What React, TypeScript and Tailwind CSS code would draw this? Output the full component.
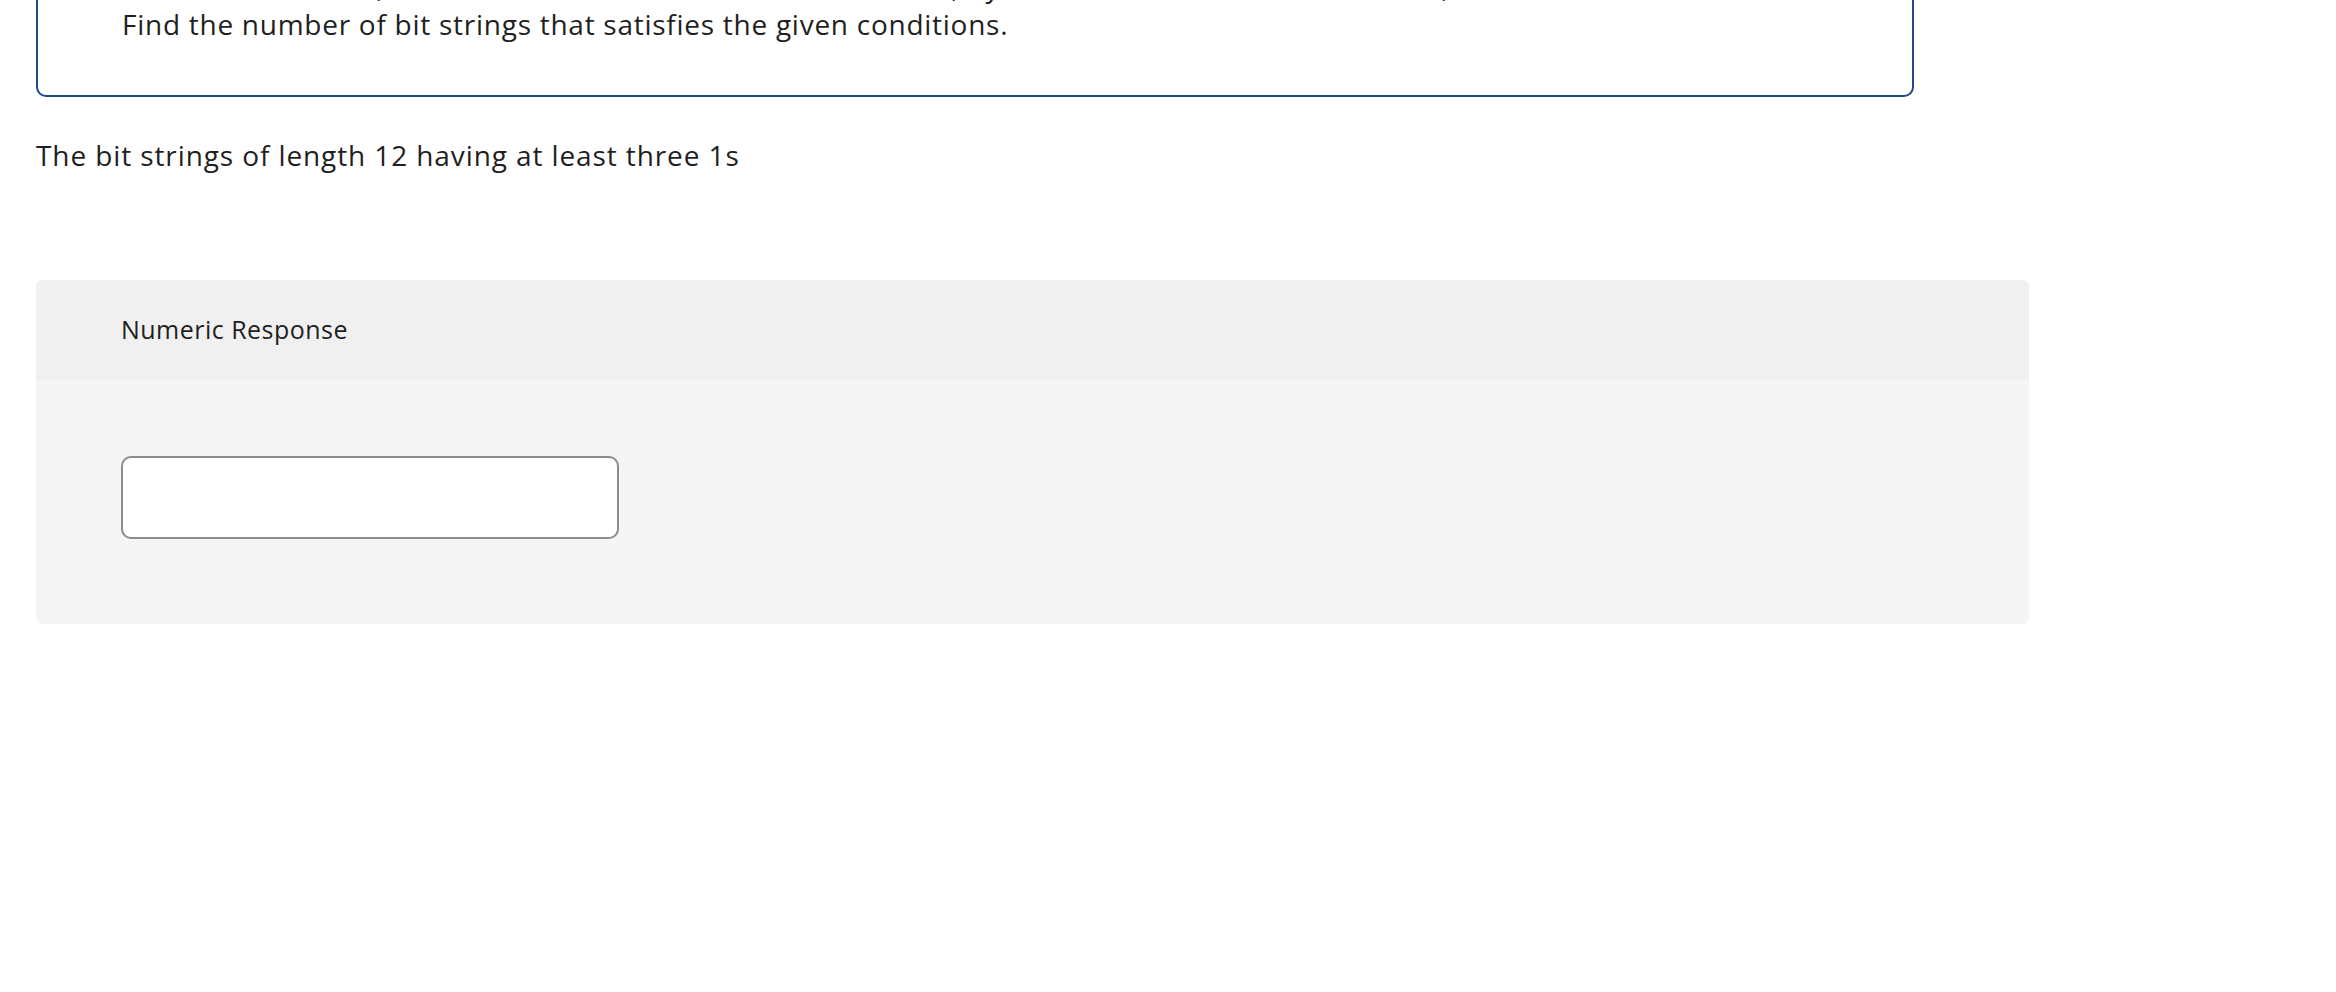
export default function App() {
  return (
    <div className="min-h-screen bg-white text-[#1f1f1f] font-['Open_Sans','Noto_Sans',sans-serif]">
      <div className="pl-9 pr-[422px]">
        <div className="-mt-[33px] rounded-b-[10px] border-x-2 border-b-2 border-[#1f4a85] pl-[84px] pr-8 pb-[52px] tracking-[0.046em]">
          <p className="whitespace-nowrap text-[28px] leading-[38px]">
            In all the exercises, a bit is either 0 or 1 and the order of bits, by which the bits are now all listed, matters.
          </p>
          <p className="text-[28px] leading-[38px]">Find the number of bit strings that satisfies the given conditions.</p>
        </div>
      </div>

      <p className="mt-[38px] pl-9 text-[28px] leading-[40px] tracking-[0.032em]">The bit strings of length 12 having at least three 1s</p>

      <div className="ml-9 mt-[105px] w-[1993px] overflow-hidden rounded-md tracking-[0.03em]">
        <div className="flex h-[100px] items-center bg-[#f0f0f0] pl-[85px] text-[25px]">Numeric Response</div>
        <div className="bg-[#f5f5f5] pl-[85px] pt-[76px] pb-[85px]">
          <input
            type="text"
            aria-label="Numeric Response"
            className="block h-[83px] w-[498px] rounded-[10px] border-2 border-[#8c8c8c] bg-white px-4 text-[25px] outline-none"
          />
        </div>
      </div>
    </div>
  );
}
